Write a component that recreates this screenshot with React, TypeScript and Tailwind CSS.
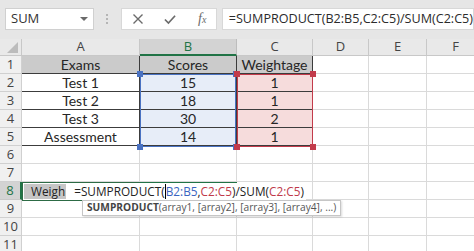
import React from "react";

const CELL_FONT = { fontFamily: "Lato, 'Open Sans', sans-serif" };
const UI_FONT = { fontFamily: "'Open Sans', 'Noto Sans', sans-serif" };

const colW = ["w-[118px]", "w-[97px]", "w-[76px]", "w-[56px]", "w-[58px]", "w-[58px]"];
const letters = ["A", "B", "C", "D", "E", "F"];

type Row = { n: number; cells: string[] };
const rows: Row[] = [
  { n: 1, cells: ["Exams", "Scores", "Weightage"] },
  { n: 2, cells: ["Test 1", "15", "1"] },
  { n: 3, cells: ["Test 2", "18", "1"] },
  { n: 4, cells: ["Test 3", "30", "2"] },
  { n: 5, cells: ["Assessment", "14", "1"] },
  { n: 6, cells: [] },
  { n: 7, cells: [] },
  { n: 8, cells: [] },
  { n: 9, cells: [] },
  { n: 10, cells: [] },
  { n: 11, cells: [] },
];

function cellClass(r: number, c: number) {
  const inTable = r >= 1 && r <= 5 && c <= 2;
  let cls = "h-full shrink-0 flex items-center justify-center border-b border-r ";
  if (inTable) {
    cls += "border-[#3c3c3c] ";
    if (r === 1) cls += "bg-[#cbcbcb] ";
    else if (c === 1) cls += "bg-[#e7edf8] ";
    else if (c === 2) cls += "bg-[#f6dcdc] ";
    else cls += "bg-white ";
  } else {
    cls += "border-[#dadada] bg-white ";
  }
  return cls;
}

function Handle({ className }: { className: string }) {
  return <div className={"absolute w-[6px] h-[6px] " + className} />;
}

export default function App() {
  return (
    <div className="w-[474px] h-[251px] overflow-hidden bg-[#e6e6e6] relative" style={UI_FONT}>
      {/* Toolbar */}
      <div className="h-[39px] flex items-start pt-[8px]">
        <div className="ml-[5px] w-[90px] h-[22px] bg-white border border-[#d0d0d0] flex items-center justify-between pl-[5px] pr-[5px]">
          <span className="text-[13px] text-[#333]">SUM</span>
          <svg width="8" height="5" viewBox="0 0 8 5"><path d="M0 0 L8 0 L4 4 Z" fill="#6a6a6a" /></svg>
        </div>
        <div className="w-[28px] h-[22px] flex flex-col items-center justify-center gap-[2px]">
          <div className="w-[2px] h-[2px] bg-[#b5b5b5]" />
          <div className="w-[2px] h-[2px] bg-[#b5b5b5]" />
          <div className="w-[2px] h-[2px] bg-[#b5b5b5]" />
        </div>
        <div className="w-[97px] h-[22px] bg-white border border-[#d8d8d8] flex items-center pl-[10px] gap-[20px]">
          <div className="w-[12px] flex justify-center">
            <svg width="12" height="12" viewBox="0 0 12 12"><path d="M1.5 1.5 L10.5 10.5 M10.5 1.5 L1.5 10.5" stroke="#6b6b6b" strokeWidth="1.4" /></svg>
          </div>
          <div className="w-[12px] flex justify-center">
            <svg width="13" height="11" viewBox="0 0 13 11"><path d="M1 5.5 L4.8 9.3 L12 1.5" stroke="#6b6b6b" strokeWidth="1.8" fill="none" /></svg>
          </div>
          <div className="w-[12px] flex justify-center">
            <span className="text-[14px] italic text-[#6b6b6b] leading-none" style={{ fontFamily: "'Liberation Serif', serif" }}>
              f<span className="text-[10px]">x</span>
            </span>
          </div>
        </div>
        <div className="ml-[5px] flex-1 h-[22px] bg-white border border-[#d8d8d8] flex items-center pl-[6px]">
          <span className="text-[12.6px] text-[#2b2b2b] whitespace-nowrap">=SUMPRODUCT(B2:B5,C2:C5)/SUM(C2:C5)</span>
        </div>
      </div>

      {/* Sheet */}
      <div className="relative bg-white">
        {/* column header */}
        <div className="h-[17px] flex bg-[#e9e9e9]">
          <div className="w-[22px] h-full shrink-0 border-r border-b border-[#c8c8c8] flex items-end justify-end pr-[3px] pb-[2px]">
            <svg width="11" height="11" viewBox="0 0 11 11"><path d="M11 0 L11 11 L0 11 Z" fill="#bcbcbc" /></svg>
          </div>
          {letters.map((l, i) => (
            <div
              key={l}
              className={
                colW[i] +
                " h-full shrink-0 flex items-center justify-center text-[13px] border-r " +
                (i === 1
                  ? "bg-[#d3d3d3] text-[#217346] border-b-2 border-b-[#217346] border-r-[#bdbdbd]"
                  : "text-[#444] border-b border-[#c8c8c8]")
              }
            >
              {l}
            </div>
          ))}
        </div>

        {rows.map((row) => (
          <div key={row.n} className="h-[18px] flex">
            <div
              className={
                "w-[22px] h-full shrink-0 flex items-center justify-center text-[13px] border-r border-b " +
                (row.n === 8
                  ? "bg-[#d3d3d3] text-[#217346] border-r-2 border-r-[#217346] border-b-[#c8c8c8]"
                  : "bg-[#f0f0f0] text-[#444] border-[#d0d0d0]")
              }
            >
              {row.n}
            </div>
            {colW.map((w, c) => (
              <div key={c} className={w + " " + cellClass(row.n, c)} style={CELL_FONT}>
                <span className="text-[14px] text-[#262626]">{row.cells[c] ?? ""}</span>
              </div>
            ))}
          </div>
        ))}

        {/* Blue range B2:B5 */}
        <div className="absolute left-[140px] top-[35px] w-[96px] h-[73px] border-[1.5px] border-[#4a72c2]">
          <Handle className="-left-[4px] -top-[4px] bg-[#4a72c2]" />
          <Handle className="-right-[4px] -top-[4px] bg-[#4a72c2]" />
          <Handle className="-left-[4px] -bottom-[4px] bg-[#4a72c2]" />
          <Handle className="-right-[4px] -bottom-[4px] bg-[#4a72c2]" />
        </div>
        {/* Red range C2:C5 */}
        <div className="absolute left-[237px] top-[35px] w-[76px] h-[73px] border-[1.5px] border-[#c23b4b]">
          <Handle className="-left-[4px] -top-[4px] bg-[#c23b4b]" />
          <Handle className="-right-[4px] -top-[4px] bg-[#c23b4b]" />
          <Handle className="-left-[4px] -bottom-[4px] bg-[#c23b4b]" />
          <Handle className="-right-[4px] -bottom-[4px] bg-[#c23b4b]" />
        </div>

        {/* Editing cell A8 */}
        <div className="absolute left-[22px] top-[143px] w-[118px] h-[19px] border-[1.5px] border-[#2d6b45] bg-white" />
        <div className="absolute left-[140px] top-[143px] w-[97px] h-[1.5px] bg-[#217346]" />
        <div className="absolute left-[232px] top-[160px] w-[6px] h-[2px] bg-[#217346]" />
        <div className="absolute left-[24px] top-[145px] h-[15px] flex items-center whitespace-nowrap" style={UI_FONT}>
          <span className="bg-[#c6c6c6] pl-[7px] pr-[1px] h-[15px] flex items-center text-[11.8px] text-[#222]">Weigh</span>
          <span className="ml-[8px] text-[11.8px] text-[#222] bg-white pr-[2px] flex items-center">
            =SUMPRODUCT(
            <span className="w-[1px] h-[15px] bg-black" />
            <span className="text-[#3a64c0]">B2:B5</span>,
            <span className="text-[#c0394a]">C2:C5</span>)/SUM(
            <span className="text-[#c0394a]">C2:C5</span>)
          </span>
        </div>

        {/* Tooltip */}
        <div className="absolute left-[82px] top-[161px] h-[16px] px-[4px] bg-white border border-[#c6c6c6] shadow-[1px_1px_2px_rgba(0,0,0,0.15)] flex items-center whitespace-nowrap text-[10.2px] text-[#555]" style={UI_FONT}>
          <span className="font-bold text-[#444]">SUMPRODUCT</span>
          <span>(array1, [array2], [array3], [array4], ...)</span>
        </div>
      </div>
    </div>
  );
}
